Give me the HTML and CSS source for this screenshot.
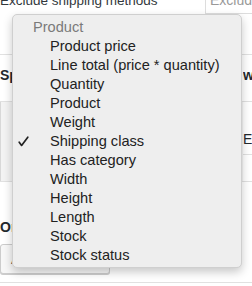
FILE: index.html
```html
<!DOCTYPE html>
<html lang="en">
<head>
    <meta charset="UTF-8">
    <meta name="viewport" content="width=device-width, initial-scale=1.0">
    <title>Conditions</title>
    <link rel="stylesheet" href="styles.css">
</head>
<body>
    <div class="page">
        <!-- fila de arriba -->
        <div class="row_top">
            <span class="top_label">Exclude shipping methods</span>
            <div class="top_input">Exclude shipping methods</div>
        </div>

        <!-- tabla de condiciones -->
        <div class="tabla">
            <div class="thead">
                <span class="th">Specific condition</span>
                <span class="th">with value</span>
            </div>
            <div class="trow">
                <div class="cell_left"><div class="select_box">Shipping class</div></div>
                <div class="cell_right"><div class="value_input">Equal to</div></div>
            </div>
        </div>

        <div class="seccion">
            <div class="seccion_titulo">Or</div>
            <button class="boton_add">Add condition group</button>
        </div>
        <div class="linea_final"></div>

        <!-- menu desplegable abierto -->
        <div class="menu">
            <div class="grupo">Product</div>
            <div class="opcion">Product price</div>
            <div class="opcion">Line total (price * quantity)</div>
            <div class="opcion">Quantity</div>
            <div class="opcion">Product</div>
            <div class="opcion">Weight</div>
            <div class="opcion seleccionada">
                <svg class="check" width="11" height="11" viewBox="0 0 11 11"><path d="M1.2 6.2 L3.6 9.4 L9.8 1.2" fill="none" stroke="#222" stroke-width="1.7" stroke-linecap="round" stroke-linejoin="round"/></svg>
                Shipping class
            </div>
            <div class="opcion">Has category</div>
            <div class="opcion">Width</div>
            <div class="opcion">Height</div>
            <div class="opcion">Length</div>
            <div class="opcion">Stock</div>
            <div class="opcion">Stock status</div>
        </div>
    </div>
</body>
</html>
```

FILE: styles.css
```css
html, body {
    margin: 0;
    padding: 0;
    background-color: #fff;
}

.page {
    position: relative;
    width: 252px;
    height: 286px;
    overflow: hidden;
    font-family: "Liberation Sans", Arial, sans-serif;
    color: #23282d;
}

.row_top {
    display: flex;
    height: 14px;
}

.top_label {
    font-size: 13.5px;
    line-height: 14px;
    margin-top: -6px;
    width: 205px;
    white-space: nowrap;
    color: #32373c;
}

.top_input {
    flex: 1;
    border-left: 1px solid #ddd;
    border-bottom: 1px solid #ddd;
    margin-top: -10px;
    padding-left: 4px;
    font-size: 14px;
    line-height: 14px;
    padding-top: 3px;
    color: #999;
    white-space: nowrap;
    overflow: hidden;
}

.tabla {
    margin-top: 40px;
}

.thead {
    display: grid;
    grid-template-columns: 243px 1fr;
    align-items: center;
    height: 46px;
    border-top: 1px solid #e1e1e1;
    border-bottom: 1px solid #e1e1e1;
}

.th {
    font-weight: bold;
    font-size: 14px;
    line-height: 19px;
    margin-top: -5px;
    white-space: nowrap;
    overflow: hidden;
}

.trow {
    display: grid;
    grid-template-columns: 243px 1fr;
    height: 79px;
    border-bottom: 1px solid #e1e1e1;
}

.select_box {
    height: 100%;
    background-color: #f3f3f3;
    border-left: 1px solid #d8d8d8;
    font-size: 14px;
    padding: 30px 8px 0 40px;
    box-sizing: border-box;
    white-space: nowrap;
}

.value_input {
    padding-top: 28px;
    height: 24px;
    font-size: 14px;
    line-height: 19px;
    border-bottom: 1px solid #e1e1e1;
    white-space: nowrap;
}

.seccion {
    margin-top: 36px;
}

.seccion_titulo {
    font-weight: bold;
    font-size: 14px;
    line-height: 19px;
}

.boton_add {
    display: block;
    margin-top: 7px;
    width: 110px;
    height: 30px;
    text-align: left;
    padding: 0 0 0 10px;
    font-family: "Liberation Sans", Arial, sans-serif;
    font-size: 13px;
    color: #555;
    background-color: #f7f7f7;
    border: 1px solid #ccc;
    border-radius: 3px;
    box-shadow: 0 1px 0 #ccc;
    white-space: nowrap;
}

.linea_final {
    margin-top: 8px;
    border-top: 1px solid #e1e1e1;
}

/* menu desplegable */
.menu {
    position: absolute;
    left: 12px;
    top: 14px;
    width: 230px;
    height: 254px;
    box-sizing: border-box;
    padding-top: 3px;
    background-color: #eeeeee;
    border: 1px solid #cfcfcf;
    border-radius: 5px;
    box-shadow: 0 4px 10px rgba(0, 0, 0, 0.22);
    font-size: 14.6px;
    line-height: 19px;
}

.grupo {
    padding-left: 20px;
    color: #7a7a7a;
}

.opcion {
    position: relative;
    padding-left: 37px;
    color: #222;
    white-space: nowrap;
}

.check {
    position: absolute;
    left: 5px;
    top: 4px;
}
```
